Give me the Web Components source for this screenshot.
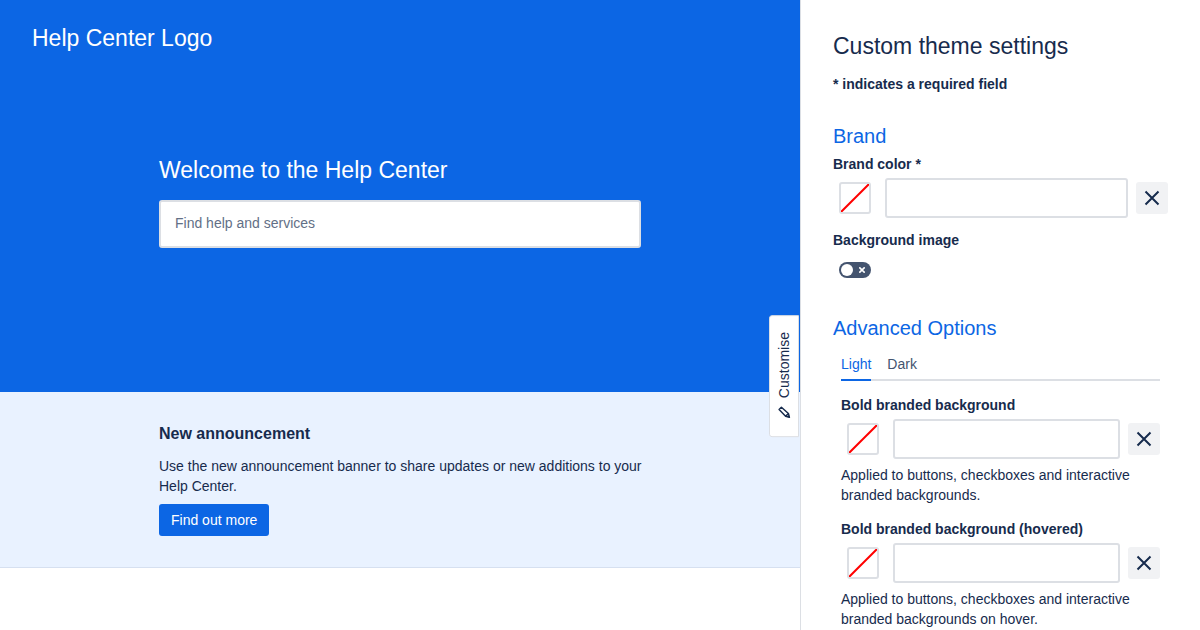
<!DOCTYPE html>
<html lang="en">
<head>
<meta charset="utf-8">
<meta name="viewport" content="width=device-width, initial-scale=1">
<title>Help Center</title>
<style>
  :root {
    --brand: #0c66e4;
    --text: #172b4d;
    --text-subtle: #44546f;
    --border: #dcdfe4;
  }
  body {
    margin: 0;
    color: var(--text);
    font-family: Helvetica, "Liberation Sans", Arial, sans-serif;
    font-size: 14px;
    line-height: 20px;
  }
</style>
</head>
<body>
<theme-editor>
  <help-hero logo="Help Center Logo" heading="Welcome to the Help Center"></help-hero>
  <announcement-banner heading="New announcement" action="Find out more">
    Use the new announcement banner to share updates or new additions to your Help Center.
  </announcement-banner>
  <settings-panel slot="panel" heading="Custom theme settings">
    <settings-section heading="Brand">
      <color-field label="Brand color *"></color-field>
      <toggle-field label="Background image"></toggle-field>
    </settings-section>
    <settings-section heading="Advanced Options">
      <theme-tabs>
        <color-field label="Bold branded background">
          <span slot="help">Applied to buttons, checkboxes and interactive branded backgrounds.</span>
        </color-field>
        <color-field label="Bold branded background (hovered)">
          <span slot="help">Applied to buttons, checkboxes and interactive branded backgrounds on hover.</span>
        </color-field>
      </theme-tabs>
    </settings-section>
  </settings-panel>
</theme-editor>

<script>
class ThemeEditor extends HTMLElement {
  constructor() {
    super();
    this.shadowDOM = this.attachShadow({ mode: "open" });
  }
  connectedCallback() {
    this.render();
  }
  render() {
    this.shadowDOM.innerHTML = `
    <style>
    :host {
        display: grid;
        grid-template-columns: 2fr 1fr;
        height: 100vh;
        overflow: hidden;
    }
    main {
        position: relative;
        min-width: 0;
    }
    .customise {
        position: absolute;
        top: 50%;
        right: 1px;
        box-sizing: border-box;
        display: flex;
        align-items: center;
        gap: 6px;
        width: 30px;
        padding: 16px 0;
        justify-content: center;
        writing-mode: vertical-rl;
        transform: rotate(180deg);
        border: 1px solid var(--border);
        border-radius: 0 3px 3px 0;
        background: white;
        color: var(--text);
        font: inherit;
        cursor: pointer;
    }
    /* the button is turned upside down, so turn the icon back */
    .customise svg {
        transform: rotate(180deg);
    }
    </style>
    <main>
        <slot></slot>
        <button class="customise" type="button">
            <svg width="16" height="16" viewBox="0 0 16 16" fill="none" stroke="currentColor" stroke-width="1.5" stroke-linejoin="round" aria-hidden="true">
                <path d="M3.1 5.4 5.4 3.1 12.4 9.3 13.4 13.2 9.6 12.2zM9.8 12 12.2 9.6"/>
                <path d="M11.4 12.8 13.8 13.6 13 11.2z" fill="currentColor" stroke="none"/>
            </svg>
            <span>Customise</span>
        </button>
    </main>
    <slot name="panel"></slot>
    `;
  }
}

class HelpHero extends HTMLElement {
  constructor() {
    super();
    this.shadowDOM = this.attachShadow({ mode: "open" });
  }
  connectedCallback() {
    this.render();
  }
  render() {
    this.shadowDOM.innerHTML = `
    <style>
    :host {
        display: block;
        padding: 24px 32px 144px;
        background: var(--brand);
        color: white;
    }
    .logo {
        font-size: 23px;
        line-height: 28px;
    }
    .search {
        max-width: 482px;
        margin: 104px auto 0;
    }
    h1 {
        margin: 0 0 16px;
        font-size: 23px;
        font-weight: normal;
        line-height: 28px;
    }
    input {
        box-sizing: border-box;
        display: block;
        width: 100%;
        height: 48px;
        padding: 0 14px 2px;
        border: 2px solid var(--border);
        border-radius: 3px;
        background: white;
        color: var(--text);
        font: inherit;
    }
    input::placeholder {
        color: #626f86;
    }
    </style>
    <div class="logo">${this.getAttribute("logo")}</div>
    <div class="search">
        <h1>${this.getAttribute("heading")}</h1>
        <input type="text" placeholder="Find help and services" aria-label="Find help and services">
    </div>
    `;
  }
}

class AnnouncementBanner extends HTMLElement {
  constructor() {
    super();
    this.shadowDOM = this.attachShadow({ mode: "open" });
  }
  connectedCallback() {
    this.render();
  }
  render() {
    this.shadowDOM.innerHTML = `
    <style>
    :host {
        display: block;
        padding: 32px 32px 31px;
        border-bottom: 1px solid #d6e0f0;
        background: #e9f2ff;
    }
    .content {
        max-width: 482px;
        margin: 0 auto;
    }
    h2 {
        margin: 0 0 12px;
        font-size: 16px;
        line-height: 20px;
    }
    p {
        margin: 0 -16px 8px 0;
    }
    button {
        height: 32px;
        padding: 0 12px;
        border: 0;
        border-radius: 3px;
        background: var(--brand);
        color: white;
        font: inherit;
        cursor: pointer;
    }
    </style>
    <div class="content">
        <h2>${this.getAttribute("heading")}</h2>
        <p><slot></slot></p>
        <button type="button">${this.getAttribute("action")}</button>
    </div>
    `;
  }
}

class SettingsPanel extends HTMLElement {
  constructor() {
    super();
    this.shadowDOM = this.attachShadow({ mode: "open" });
  }
  connectedCallback() {
    this.render();
  }
  render() {
    this.shadowDOM.innerHTML = `
    <style>
    :host {
        display: block;
        min-width: 0;
        padding: 32px;
        border-left: 1px solid var(--border);
        overflow-y: auto;
        scrollbar-width: none;
        background: white;
    }
    h1 {
        margin: 0 0 14px;
        font-size: 23px;
        font-weight: normal;
        line-height: 28px;
    }
    p {
        margin: 0 0 30px;
        font-weight: bold;
    }
    .sections {
        display: grid;
        gap: 38px;
    }
    </style>
    <h1>${this.getAttribute("heading")}</h1>
    <p>* indicates a required field</p>
    <div class="sections"><slot></slot></div>
    `;
  }
}

class SettingsSection extends HTMLElement {
  constructor() {
    super();
    this.shadowDOM = this.attachShadow({ mode: "open" });
  }
  connectedCallback() {
    this.render();
  }
  render() {
    this.shadowDOM.innerHTML = `
    <style>
    :host {
        display: block;
        min-width: 0;
    }
    h2 {
        margin: 0 0 6px;
        color: var(--brand);
        font-size: 20px;
        font-weight: normal;
        line-height: 24px;
    }
    .fields {
        display: grid;
        gap: 12px;
    }
    </style>
    <h2>${this.getAttribute("heading")}</h2>
    <div class="fields"><slot></slot></div>
    `;
  }
}

class ColorField extends HTMLElement {
  constructor() {
    super();
    this.shadowDOM = this.attachShadow({ mode: "open" });
  }
  connectedCallback() {
    this.render();
  }
  render() {
    const label = this.getAttribute("label");
    const help = this.querySelector("[slot=help]")
      ? `<div class="help"><slot name="help"></slot></div>`
      : "";
    this.shadowDOM.innerHTML = `
    <style>
    :host {
        display: block;
        min-width: 0;
    }
    label {
        display: block;
        margin-bottom: 4px;
        font-weight: bold;
    }
    .row {
        display: flex;
        align-items: center;
        gap: 8px;
        padding-left: 6px;
    }
    button {
        flex: none;
        box-sizing: border-box;
        display: grid;
        place-items: center;
        width: 32px;
        height: 32px;
        padding: 0;
        border: 0;
        border-radius: 3px;
        color: var(--text);
        cursor: pointer;
    }
    .swatch {
        margin-right: 6px;
        border: 2px solid var(--border);
        background: white;
    }
    .clear {
        background: #f1f2f4;
    }
    input {
        box-sizing: border-box;
        flex: 1;
        min-width: 0;
        height: 40px;
        padding: 0 8px;
        border: 2px solid var(--border);
        border-radius: 3px;
        background: white;
        color: var(--text);
        font: inherit;
    }
    .help {
        margin-top: 6px;
    }
    </style>
    <label for="colorElement">${label}</label>
    <div class="row">
        <button class="swatch" type="button" aria-label="Pick a color">
            <svg width="28" height="28" viewBox="0 0 28 28" aria-hidden="true">
                <path d="M0 28 28 0" stroke="#f00" stroke-width="2"/>
            </svg>
        </button>
        <input id="colorElement" type="text">
        <button class="clear" type="button" aria-label="Clear">
            <svg width="16" height="16" viewBox="0 0 16 16" aria-hidden="true">
                <path d="M1.5 1.5 14.5 14.5M14.5 1.5 1.5 14.5" stroke="currentColor" stroke-width="2"/>
            </svg>
        </button>
    </div>
    ${help}
    `;
  }
}

class ToggleField extends HTMLElement {
  constructor() {
    super();
    this.shadowDOM = this.attachShadow({ mode: "open" });
  }
  connectedCallback() {
    this.render();
  }
  render() {
    this.shadowDOM.innerHTML = `
    <style>
    :host {
        display: block;
    }
    label {
        display: block;
        margin-bottom: 12px;
        font-weight: bold;
    }
    .toggle {
        display: grid;
        width: 32px;
        margin-left: 6px;
    }
    .toggle > * {
        grid-area: 1 / 1;
    }
    input {
        appearance: none;
        box-sizing: border-box;
        width: 32px;
        height: 16px;
        margin: 0;
        padding: 2px;
        border-radius: 8px;
        background: var(--text-subtle);
        cursor: pointer;
    }
    input::before {
        content: "";
        display: block;
        width: 12px;
        height: 12px;
        border-radius: 50%;
        background: white;
    }
    input:checked::before {
        margin-left: auto;
    }
    svg {
        place-self: center end;
        margin-right: 6px;
        pointer-events: none;
    }
    input:checked + svg {
        display: none;
    }
    </style>
    <label for="toggleElement">${this.getAttribute("label")}</label>
    <div class="toggle">
        <input id="toggleElement" type="checkbox" role="switch">
        <svg width="6" height="6" viewBox="0 0 6 6" aria-hidden="true">
            <path d="M.3.3 5.7 5.7M5.7.3.3 5.7" stroke="white" stroke-width="1.6"/>
        </svg>
    </div>
    `;
  }
}

class ThemeTabs extends HTMLElement {
  constructor() {
    super();
    this.shadowDOM = this.attachShadow({ mode: "open" });
  }
  connectedCallback() {
    this.render();
  }
  render() {
    this.shadowDOM.innerHTML = `
    <style>
    :host {
        display: block;
        min-width: 0;
        padding: 4px 8px 0;
    }
    .tabs {
        display: flex;
        gap: 16px;
        box-shadow: inset 0 -2px var(--border);
    }
    button {
        padding: 4px 0 5px;
        border: 0;
        border-bottom: 2px solid transparent;
        background: none;
        color: var(--text-subtle);
        font: inherit;
        cursor: pointer;
    }
    button[aria-selected="true"] {
        border-color: var(--brand);
        color: var(--brand);
    }
    .panel {
        display: grid;
        gap: 14px;
        padding-top: 14px;
    }
    </style>
    <div class="tabs" role="tablist">
        <button type="button" role="tab" aria-selected="true">Light</button>
        <button type="button" role="tab" aria-selected="false">Dark</button>
    </div>
    <div class="panel" role="tabpanel"><slot></slot></div>
    `;
  }
}

customElements.define("theme-editor", ThemeEditor);
customElements.define("help-hero", HelpHero);
customElements.define("announcement-banner", AnnouncementBanner);
customElements.define("settings-panel", SettingsPanel);
customElements.define("settings-section", SettingsSection);
customElements.define("color-field", ColorField);
customElements.define("toggle-field", ToggleField);
customElements.define("theme-tabs", ThemeTabs);
</script>
</body>
</html>
